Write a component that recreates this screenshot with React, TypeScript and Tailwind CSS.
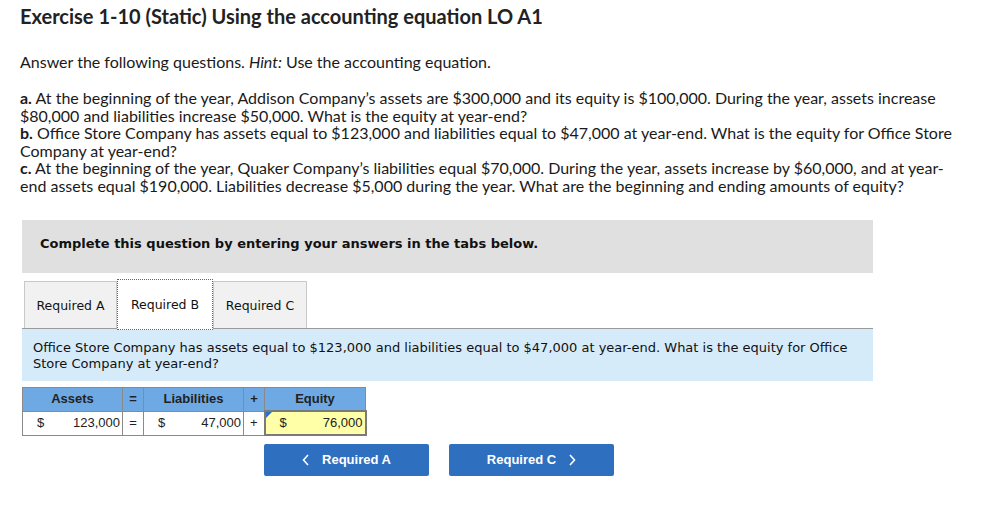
import React from "react";

const body = { fontFamily: '"Lato", "Open Sans", sans-serif' };
const verdana = { fontFamily: '"DejaVu Sans", Verdana, sans-serif' };
const arial = { fontFamily: '"Liberation Sans", Arial, sans-serif' };

function Tab({ label, active, w }: { label: string; active?: boolean; w: string }) {
  if (active) {
    return (
      <div className={`relative z-10 -mt-[2px] flex h-[51px] items-center justify-center border border-dotted border-[#2f6fbf] bg-white pt-[3px] text-[12.5px] text-[#111] ${w}`} style={verdana}>
        {label}
      </div>
    );
  }
  return (
    <div className={`flex h-[47px] items-center justify-center border border-b-0 border-[#c8c8c8] bg-[#f1f1f1] pt-[3px] text-[12.5px] text-[#111] ${w}`} style={verdana}>
      {label}
    </div>
  );
}

export default function App() {
  return (
    <div className="min-h-[531px] w-[1004px] bg-white text-[#1a1a1a]">
      <div className="px-5 pt-[3px]">
        <h1 className="text-[20px] font-bold leading-[26px] text-[#222]" style={body}>
          Exercise 1-10 (Static) Using the accounting equation LO A1
        </h1>
        <p className="mt-[24px] text-[16px] leading-[18px]" style={body}>
          Answer the following questions. <i>Hint:</i> Use the accounting equation.
        </p>
        <p className="mt-[18px] text-[16px] leading-[17.6px]" style={body}>
          <b>a.</b> At the beginning of the year, Addison Company’s assets are $300,000 and its equity is $100,000. During the year, assets increase
          <br />$80,000 and liabilities increase $50,000. What is the equity at year-end?
          <br />
          <b>b.</b> Office Store Company has assets equal to $123,000 and liabilities equal to $47,000 at year-end. What is the equity for Office Store
          <br />Company at year-end?
          <br />
          <b>c.</b> At the beginning of the year, Quaker Company’s liabilities equal $70,000. During the year, assets increase by $60,000, and at year-
          <br />end assets equal $190,000. Liabilities decrease $5,000 during the year. What are the beginning and ending amounts of equity?
        </p>
      </div>

      <div className="ml-[22px] mt-[25px] w-[851px]">
        <div className="flex h-[53px] items-start bg-[#e0e0e0] pl-[18px] pt-[14px] text-[13px] font-bold text-[#111]" style={verdana}>
          Complete this question by entering your answers in the tabs below.
        </div>

        <div className="mt-[8px] flex h-[48px] items-start border-b border-[#9a9a9a] pl-[2px]">
          <Tab label="Required A" w="w-[93px]" />
          <Tab label="Required B" active w="w-[96px]" />
          <Tab label="Required C" w="w-[94px]" />
        </div>

        <div className="bg-[#d6ebf9] px-[11px] pb-[9px] pt-[11px] text-[13px] leading-[16px] text-[#111]" style={verdana}>
          Office Store Company has assets equal to $123,000 and liabilities equal to $47,000 at year-end. What is the equity for Office
          <br />
          Store Company at year-end?
        </div>

        <table className="mt-[6px] border-collapse text-[13px] text-[#222]" style={arial}>
          <thead>
            <tr className="h-[24px] bg-[#6fa9e3] font-bold">
              <th className="w-[100px] border border-[#8a8a8a] font-bold">Assets</th>
              <th className="w-[21px] border border-[#8a8a8a] font-bold">=</th>
              <th className="w-[100px] border border-[#8a8a8a] font-bold">Liabilities</th>
              <th className="w-[21px] border border-[#8a8a8a] font-bold">+</th>
              <th className="w-[101px] border border-[#8a8a8a] font-bold">Equity</th>
            </tr>
          </thead>
          <tbody>
            <tr className="h-[24px]">
              <td className="border border-[#8a8a8a] px-[2px]">
                <div className="flex justify-between pl-[12px]"><span>$</span><span>123,000</span></div>
              </td>
              <td className="border border-[#8a8a8a] text-center">=</td>
              <td className="border border-[#8a8a8a] px-[2px]">
                <div className="flex justify-between pl-[12px]"><span>$</span><span>47,000</span></div>
              </td>
              <td className="border border-[#8a8a8a] text-center">+</td>
              <td className="relative border-2 border-[#7a7a7a] bg-[#ffffa8] px-[2px]">
                <span className="absolute left-0 top-0 h-0 w-0 border-l-[6px] border-b-[6px] border-l-[#2f6fbf] border-b-transparent" />
                <div className="flex justify-between pl-[12px]"><span>$</span><span>76,000</span></div>
              </td>
            </tr>
          </tbody>
        </table>

        <div className="mt-[8px] flex gap-[20px] pl-[242px]">
          <button className="flex h-[32px] w-[165px] items-center justify-center gap-[12px] rounded-[2px] bg-[#2f6fbf] text-[13px] font-bold text-white" style={arial}>
            <svg width="8" height="12" viewBox="0 0 8 12"><path d="M6 1 L1.5 6 L6 11" fill="none" stroke="white" strokeWidth="1.6" /></svg>
            <span>Required A</span>
          </button>
          <button className="flex h-[32px] w-[165px] items-center justify-center gap-[12px] rounded-[2px] bg-[#2f6fbf] text-[13px] font-bold text-white" style={arial}>
            <span>Required C</span>
            <svg width="8" height="12" viewBox="0 0 8 12"><path d="M2 1 L6.5 6 L2 11" fill="none" stroke="white" strokeWidth="1.6" /></svg>
          </button>
        </div>
      </div>
    </div>
  );
}
